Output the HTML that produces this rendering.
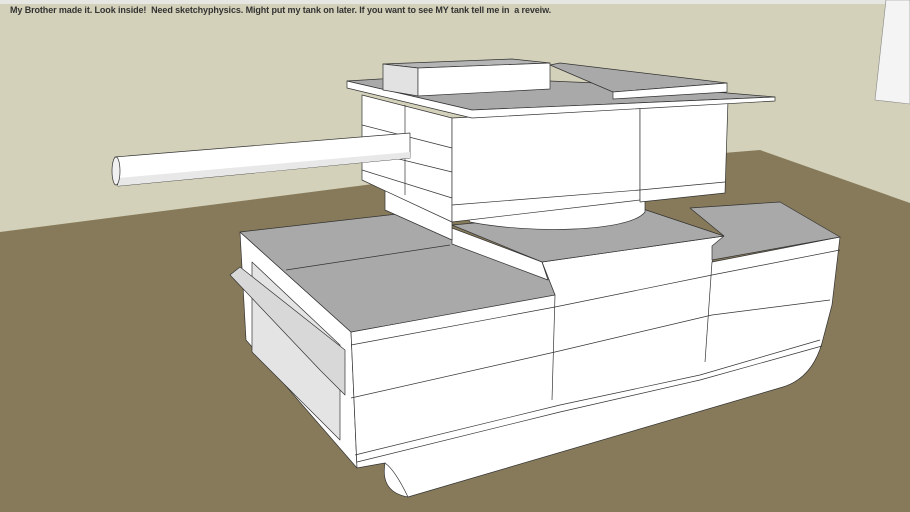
<!DOCTYPE html>
<html><head><style>
html,body{margin:0;padding:0;width:910px;height:512px;overflow:hidden;background:#d3d1b9}
svg{position:absolute;left:0;top:0}
.t{position:absolute;left:10px;top:5px;font:bold 9px "Liberation Sans",sans-serif;color:#333;letter-spacing:-0.1px;white-space:nowrap}
</style></head><body>
<svg width="910" height="512" viewBox="0 0 910 512">
<rect x="0" y="0" width="910" height="512" fill="#d3d1b9"/>
<rect x="0" y="0" width="910" height="4" fill="#e6e6e2"/>
<polygon points="0,232 420,178 760,150 910,203 910,512 0,512" fill="#877a5a"/>
<polygon points="886,0 910,0 910,104 875,100" fill="#f4f4f4" stroke="#888" stroke-width="0.6"/>
<g stroke="#333" stroke-width="0.7" stroke-linejoin="round">
<!-- hull left side -->
<polygon points="240,232 351,332 357,468 246,340" fill="#fff"/>
<polygon points="252,262 340,345 340,440 252,352" fill="#e4e4e4"/>
<polygon points="230,275 240,267 345,350 345,395 320,370" fill="#d8d8d8"/>
<!-- front face + track body -->
<path d="M351,332 L542,297 L542,262 L724,236 L712,262 L840,237 L832,305 L822,343 Q812,378 783,387 L408,497 Q380,492 385,463 L357,468 Z" fill="#fff"/>
<polyline points="351,345 555,307 712,275 840,250" fill="none"/>
<polyline points="351,398 555,352 712,315 830,300" fill="none"/>
<polyline points="355,455 560,405 700,375 820,340" fill="none"/>
<polyline points="357,462 560,412 700,380 822,346" fill="none"/>
<line x1="555" y1="295" x2="552" y2="400" />
<line x1="712" y1="262" x2="705" y2="362" />
<line x1="542" y1="262" x2="555" y2="295"/>
<path d="M385,463 Q395,470 408,497" fill="none"/>
<!-- decks -->
<polygon points="240,232 415,212 452,240 542,262 555,295 351,332" fill="#a9a9a9"/>
<line x1="286" y1="270" x2="450" y2="245"/>
<polygon points="452,225 640,208 724,236 542,262" fill="#a9a9a9"/>
<polygon points="452,228 542,262 548,280 452,244" fill="#fff"/>
<polygon points="690,208 780,202 840,237 712,260 712,246 724,236" fill="#a9a9a9"/>
<!-- turret neck -->
<polygon points="385,190 452,215 452,240 385,210" fill="#fff"/>
<!-- turret ring -->
<path d="M460,205 L645,198 L645,212 C630,232 530,234 470,222 Z" fill="#fff"/>
<!-- turret left slotted side -->
<polygon points="362,95 452,118 452,222 362,180" fill="#fff"/>
<line x1="362" y1="125" x2="452" y2="148"/>
<line x1="362" y1="150" x2="452" y2="172"/>
<line x1="362" y1="170" x2="452" y2="198"/>
<line x1="405" y1="105" x2="405" y2="195"/>
<!-- turret faces -->
<polygon points="452,118 640,108 640,200 452,222" fill="#fff"/>
<line x1="452" y1="205" x2="640" y2="190"/>
<polygon points="640,108 728,100 725,193 640,202" fill="#fff"/>
<line x1="640" y1="190" x2="725" y2="182"/>
<!-- barrel -->
<polygon points="115,157 410,133 410,158 118,186" fill="#fff"/>
<polygon points="118,178 410,152 410,158 118,186" fill="#e8e8e8" stroke="none"/>
<ellipse cx="116" cy="171" rx="4" ry="14" fill="#f0f0f0"/>
<!-- roof plate -->
<polygon points="347,81 430,76 620,84 775,97 472,110" fill="#a9a9a9"/>
<polygon points="347,81 472,110 775,97 775,101 472,118 347,88" fill="#fff"/>
<!-- raised right plate -->
<polygon points="550,65 560,63 727,83 613,92" fill="#a9a9a9"/>
<polygon points="613,92 727,83 727,92 613,99" fill="#fff"/>
<!-- hatch box -->
<polygon points="383,64 512,59 550,63 418,68" fill="#b5b5b5"/>
<polygon points="383,64 418,68 418,96 383,90" fill="#e2e2e2"/>
<polygon points="418,68 550,63 550,89 418,96" fill="#fff"/>
</g>
</svg>
<div class="t">My Brother made it. Look inside!&nbsp; Need sketchyphysics. Might put my tank on later. If you want to see MY tank tell me in&nbsp; a reveiw.</div>
</body></html>
